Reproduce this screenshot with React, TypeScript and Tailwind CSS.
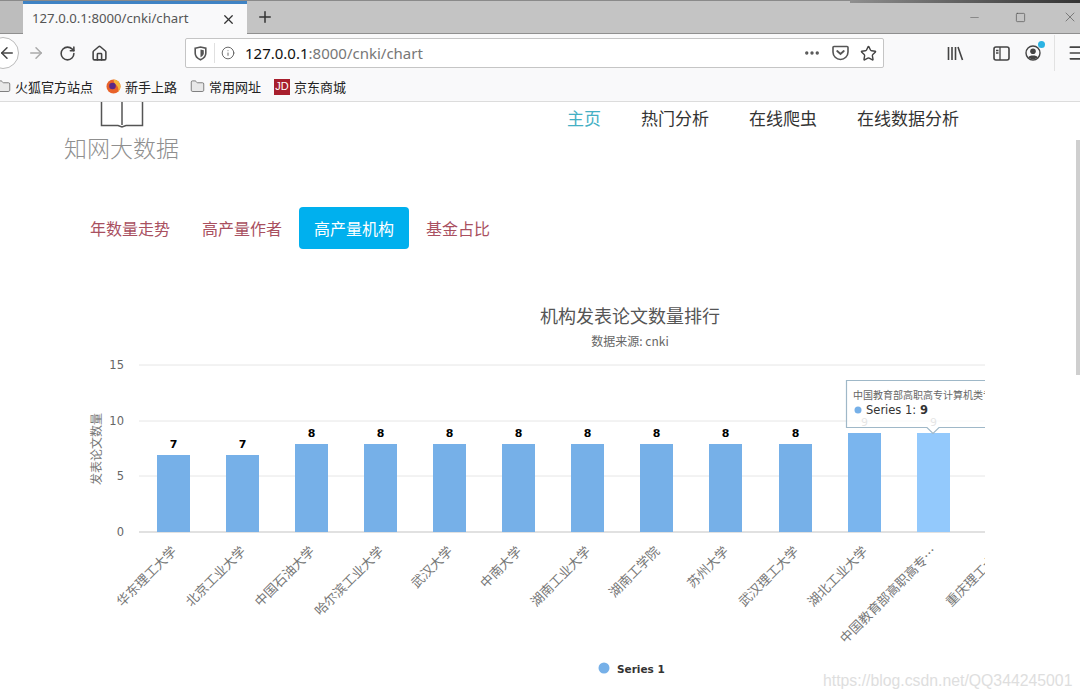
import React from 'react';
import { ArrowLeft, ArrowRight, RotateCw, Home, Star, Info, X, Plus, Minus, Square, Menu, Folder, Ellipsis } from 'lucide-react';

const cjk = "font-['Noto_Sans_CJK_SC','Noto_Sans',sans-serif]";

const bars = [
  { name: '华东理工大学', value: 7, x: 157 },
  { name: '北京工业大学', value: 7, x: 226 },
  { name: '中国石油大学', value: 8, x: 295 },
  { name: '哈尔滨工业大学', value: 8, x: 364 },
  { name: '武汉大学', value: 8, x: 433 },
  { name: '中南大学', value: 8, x: 502 },
  { name: '湖南工业大学', value: 8, x: 571 },
  { name: '湖南工学院', value: 8, x: 640 },
  { name: '苏州大学', value: 8, x: 709 },
  { name: '武汉理工大学', value: 8, x: 779 },
  { name: '湖北工业大学', value: 9, x: 848 },
  { name: '中国教育部高职高专…', value: 9, x: 917 },
  { name: '重庆理工大学', value: 8, x: 986 },
];

const yTicks = [
  { label: '15', y: 365 },
  { label: '10', y: 421 },
  { label: '5', y: 476 },
  { label: '0', y: 532 },
];

const bookmarks = [
  { label: '火狐官方站点', icon: 'folder' },
  { label: '新手上路', icon: 'firefox' },
  { label: '常用网址', icon: 'folder' },
  { label: '京东商城', icon: 'jd' },
];

const navItems = ['主页', '热门分析', '在线爬虫', '在线数据分析'];
const tabs = ['年数量走势', '高产量作者', '高产量机构', '基金占比'];

const TabBar = () => (
  <div className="h-[34px] bg-[#c4c4c4] border-t border-b border-t-[#8a8a8a] border-b-[#8f8f8f] flex items-stretch">
    <div className="w-[23px] bg-[#bdbdbd]" />
    <div className="w-[224px] h-[33px] bg-[#f9f9fa] border-t-[3px] border-[#3f83c4] flex items-center pl-[9px] pr-[11px] justify-between">
      <span className="text-[13.2px] text-[#555] font-['Noto_Sans',sans-serif] whitespace-nowrap">127.0.0.1:8000/cnki/chart</span>
      <X size={15} strokeWidth={2} className="text-[#333]" />
    </div>
    <div className="ml-[9px] flex items-center">
      <Plus size={18} strokeWidth={2} className="text-[#333]" />
    </div>
    <div className="flex-1 flex items-center justify-end text-[#555]">
      <Minus size={13} strokeWidth={1} />
      <Square size={11} strokeWidth={1.5} className="ml-[34px]" />
      <X size={16} strokeWidth={1} className="ml-[36px] mr-[2px]" />
    </div>
  </div>
);

const Toolbar = () => (
  <div className="h-[38px] bg-[#f9f9fa] flex items-center text-[#444]">
    <div className="w-[32px] h-[32px] ml-[-13px] rounded-full border border-[#bbb] bg-white flex items-center justify-center shrink-0">
      <ArrowLeft size={18} strokeWidth={2} className="ml-[8px]" />
    </div>
    <ArrowRight size={18} strokeWidth={2} className="ml-[8px] text-[#aaa] shrink-0" />
    <RotateCw size={17} strokeWidth={2.2} className="ml-[14px] shrink-0" />
    <Home size={17} strokeWidth={2.2} className="ml-[15px] shrink-0" />
    <div className="ml-[77px] w-[699px] shrink-0 h-[30px] bg-white border border-[#c5c5c5] rounded-[2px] flex items-center pl-[8px] pr-[6px]">
      <svg width="13" height="15" viewBox="0 0 13 15" className="shrink-0">
        <path d="M1.2 2.2 6.5 1l5.3 1.2v5c0 3-2.3 5.2-5.3 6.6C3.5 12.4 1.2 10.2 1.2 7.2z" fill="none" stroke="#555" strokeWidth="1.6" />
        <path d="M6.5 3.5 9.8 4.2v3c0 1.8-1.4 3.1-3.3 4z" fill="#555" />
      </svg>
      <div className="w-px h-[20px] bg-[#e0e0e0] ml-[7px]" />
      <Info size={14} strokeWidth={1.5} className="ml-[6px] text-[#555]" />
      <span className="ml-[10px] text-[15px] font-['Noto_Sans',sans-serif] text-[#777] whitespace-nowrap">
        <span className="text-[#111]">127.0.0.1</span>:8000/cnki/chart
      </span>
      <Ellipsis size={18} strokeWidth={2.5} className="ml-auto text-[#555]" />
      <svg width="17" height="16" viewBox="0 0 17 16" className="ml-[11px]">
        <path d="M2 1.5h13a1 1 0 0 1 1 1V7a7.5 7.5 0 0 1-15 0V2.5a1 1 0 0 1 1-1z" fill="none" stroke="#555" strokeWidth="1.6" />
        <path d="M5.2 6 8.5 9l3.3-3" fill="none" stroke="#555" strokeWidth="1.8" strokeLinecap="round" />
      </svg>
      <Star size={17} strokeWidth={2} className="ml-[11px] text-[#444]" />
    </div>
    <svg width="17" height="15" viewBox="0 0 17 15" className="ml-[63px] shrink-0">
      <path d="M1.5 1v13M5 1v13M8.5 1v13M11 1l4.5 13" fill="none" stroke="#444" strokeWidth="1.6" />
    </svg>
    <svg width="17" height="15" viewBox="0 0 17 15" className="ml-[29px] shrink-0">
      <rect x="1" y="1" width="15" height="13" rx="2" fill="none" stroke="#444" strokeWidth="1.6" />
      <path d="M7 1v13M3 4.5h2.5M3 7h2.5" stroke="#444" strokeWidth="1.3" />
    </svg>
    <div className="ml-[15px] relative w-[16px] h-[16px] shrink-0">
      <svg width="16" height="16" viewBox="0 0 16 16">
        <circle cx="8" cy="8" r="7" fill="none" stroke="#444" strokeWidth="1.4" />
        <circle cx="8" cy="6.2" r="2.8" fill="#444" />
        <path d="M3.2 12.5c1-2.6 8.6-2.6 9.6 0-2.5 2.4-7.1 2.4-9.6 0z" fill="#444" />
      </svg>
      <div className="absolute top-[-4px] right-[-4px] w-[7px] h-[7px] rounded-full bg-[#2bb3e3]" />
    </div>
    <div className="ml-[13px] w-px h-[36px] shrink-0 bg-[#e2e2e2]" />
    <Menu size={20} strokeWidth={2} className="ml-[12px] shrink-0" />
  </div>
);

const BookmarkIcon = ({ icon }: { icon: string }) => {
  if (icon === 'firefox') {
    return (
      <svg width="15" height="15" viewBox="0 0 15 15" className="shrink-0">
        <circle cx="7.5" cy="7.5" r="7" fill="#e8622a" />
        <path d="M7.5.5a7 7 0 0 1 7 7c0 2-1 4-2.5 5.2 1-2.5.2-5.5-2-7C8.5 4.8 7.8 3 7.5.5z" fill="#f6b73c" />
        <circle cx="6.5" cy="7" r="3.3" fill="#5b2a86" />
      </svg>
    );
  }
  if (icon === 'jd') {
    return (
      <div className="w-[16px] h-[16px] bg-[#a81f2d] text-white text-[11px] font-['Liberation_Sans',sans-serif] flex items-center justify-center shrink-0">
        JD
      </div>
    );
  }
  return <Folder size={15} strokeWidth={1.3} fill="#e8e8e8" className="text-[#666] shrink-0" />;
};

const BookmarkBar = () => (
  <div className={`h-[30px] bg-[#f9f9fa] border-b border-[#dcdcdc] flex items-center ${cjk}`}>
    {bookmarks.map((b, i) => (
      <div key={b.label} className={`flex items-center gap-[4px] ${i === 0 ? 'ml-[-4px]' : 'ml-[13px]'}`}>
        <BookmarkIcon icon={b.icon} />
        <span className="text-[13px] text-[#222] whitespace-nowrap">{b.label}</span>
      </div>
    ))}
  </div>
);

const Header = () => (
  <div className={`flex justify-between pl-[65px] pr-[117px] ${cjk}`}>
    <div className="w-[113px] flex flex-col items-center">
      <svg width="44" height="26" viewBox="0 0 44 26">
        <path d="M1.5 0v23.5H18l4 1.5 4-1.5h16.5V0M22 0v23" fill="none" stroke="#555" strokeWidth="1.5" />
      </svg>
      <div className="mt-[2px] text-[23px] leading-[34px] font-light text-[#8f8f8f] whitespace-nowrap">知网大数据</div>
    </div>
    <nav className="flex gap-[40px] pt-[3px] text-[17px] leading-[26px] text-[#333]">
      {navItems.map((item, i) => (
        <a key={item} className={i === 0 ? 'text-[#45b0c4]' : ''}>{item}</a>
      ))}
    </nav>
  </div>
);

const Tabs = () => (
  <div className={`flex gap-[2px] pl-[75px] mt-[43px] ${cjk}`}>
    {tabs.map((t, i) => (
      <a
        key={t}
        className={`h-[42px] px-[15px] pb-[1px] rounded-[4px] text-[16px] flex items-center ${i === 2 ? 'bg-[#00b0ee] text-white' : 'text-[#a9505f]'}`}
      >
        {t}
      </a>
    ))}
  </div>
);

const Chart = () => (
  <svg width="900" height="398" viewBox="85 300 900 398" className="ml-[85px] mt-[51px] block" fontFamily="'Noto Sans CJK SC','Noto Sans',sans-serif">
    <text x="630" y="323" textAnchor="middle" fontSize="18" fill="#555">机构发表论文数量排行</text>
    <text x="630" y="346" textAnchor="middle" fontSize="12" fill="#666">数据来源: cnki</text>

    {yTicks.map(t => (
      <g key={t.label}>
        <line x1="139" x2="985" y1={t.y} y2={t.y} stroke="#e6e6e6" />
        <text x="124" y={t.y + 4} textAnchor="end" fontSize="11.5" fill="#666" fontFamily="'DejaVu Sans',sans-serif">{t.label}</text>
      </g>
    ))}
    <line x1="139" x2="985" y1="532" y2="532" stroke="#cfcfcf" />
    <text transform="translate(101 449) rotate(-90)" textAnchor="middle" fontSize="12" fill="#777">发表论文数量</text>

    {bars.map((b, i) => {
      const top = 532 - b.value * 11;
      const hovered = i === 11;
      const faded = i >= 10;
      const cx = b.x + 16.5;
      return (
        <g key={b.name}>
          {i < 12 && <rect x={b.x} y={top} width="33" height={532 - top} fill={hovered ? '#93c9fc' : i === 10 ? '#7ab5ee' : '#76b0e8'} />}
          {i < 12 && (
            <text x={cx} y={top - 7} textAnchor="middle" fontSize="11" fontWeight={faded ? 400 : 700} fill={faded ? '#999' : '#000'} fontFamily="'DejaVu Sans',sans-serif">
              {b.value}
            </text>
          )}
          <text transform={`translate(${cx + 4} 552) rotate(-45)`} textAnchor="end" fontSize="13" fill="#777">{b.name}</text>
        </g>
      );
    })}

    <g>
      <path d="M846.5 380.5H990V427.5H939L933 433.5 927 427.5H846.5z" fill="#ffffff" fillOpacity="0.75" stroke="#9fb8c8" strokeWidth="1.2" />
      <text x="853" y="399" fontSize="10" fill="#666">中国教育部高职高专计算机类专业</text>
      <circle cx="858" cy="410" r="3.5" fill="#76b0e8" />
      <text x="866" y="414" fontSize="11.5" fill="#333" fontFamily="'DejaVu Sans',sans-serif">
        Series 1: <tspan fontWeight="700">9</tspan>
      </text>
    </g>

    <circle cx="604" cy="668" r="5.5" fill="#76b0e8" />
    <text x="617" y="673" fontSize="10.5" fontWeight="700" fill="#333" fontFamily="'DejaVu Sans',sans-serif">Series 1</text>
  </svg>
);

const App = () => {
  return (
    <div className="w-[1080px] h-[698px] overflow-hidden bg-white relative flex flex-col">
      <TabBar />
      <Toolbar />
      <BookmarkBar />
      <div className="flex-1 flex min-h-0 overflow-hidden">
        <main className="flex-1 min-w-0">
          <Header />
          <Tabs />
          <Chart />
        </main>
        <div className="w-[4px] shrink-0">
          <div className="mt-[38px] h-[235px] bg-[#cfcfcf]" />
        </div>
      </div>
      <div className="absolute left-[823px] top-[669px] text-[15.8px] text-[#dedede] font-['Liberation_Sans',sans-serif] whitespace-nowrap">
        https://blog.csdn.net/QQ344245001
      </div>
      <div className="absolute right-0 top-0 w-[230px] h-[3px] bg-gradient-to-r from-[#8f8f8f] to-[#333]" />
    </div>
  );
};

export default App;
